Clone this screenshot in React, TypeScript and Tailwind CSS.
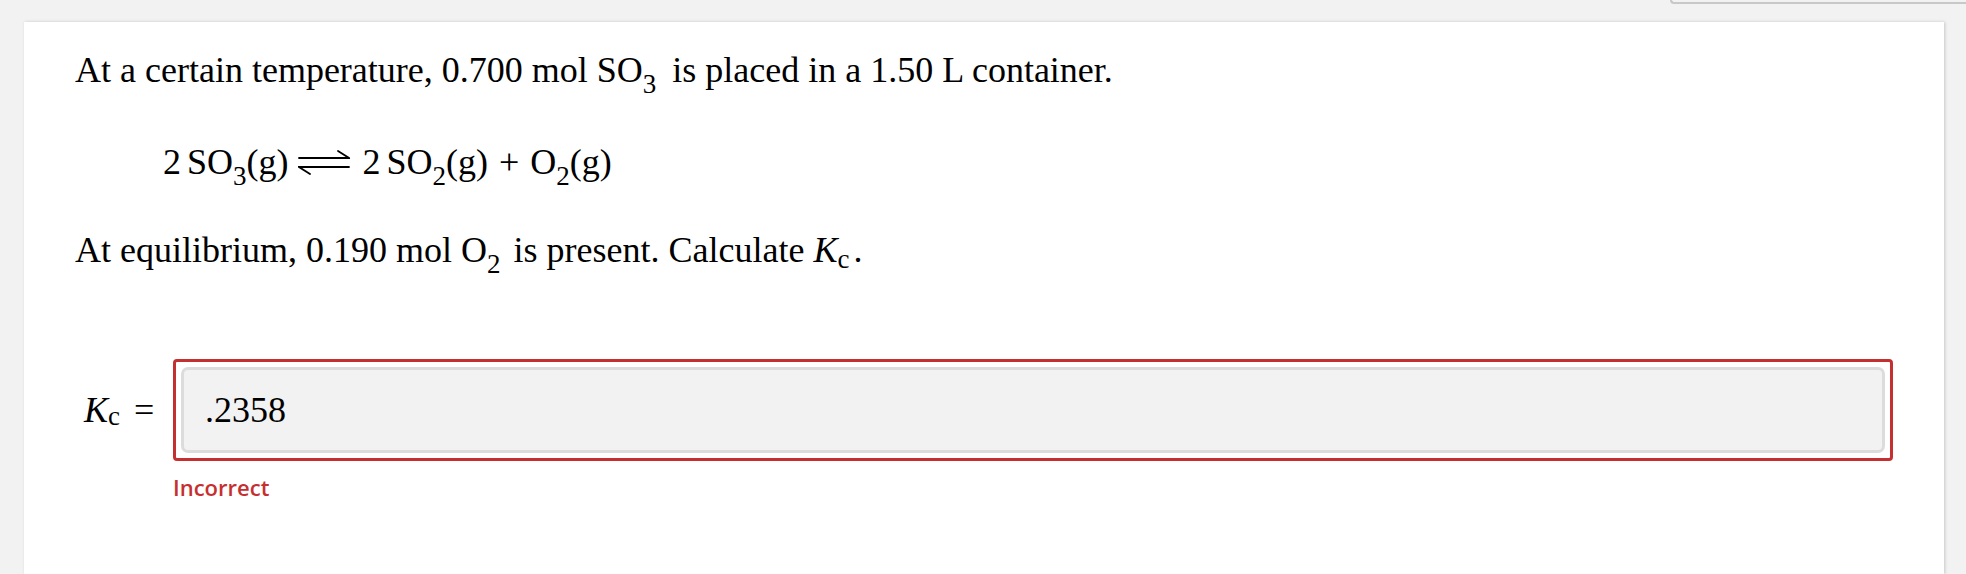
import React from 'react';

// Small subscript used for chemical formulas and K_c
function Sub({ children, shift = 'top-[11px]' }: { children: React.ReactNode; shift?: string }) {
  return <span className={`relative ${shift} text-[27px] leading-none`}>{children}</span>;
}

function EquilibriumArrow() {
  return (
    <svg
      width="52"
      height="28"
      viewBox="0 0 52 28"
      className="inline-block align-[-3px] ml-[9px] mr-[13px]"
      fill="none"
      stroke="#000"
      strokeWidth="1.8"
      strokeLinecap="round"
    >
      <path d="M1 9 H51 L40 2" />
      <path d="M51 18 H1 L12 25" />
    </svg>
  );
}

function Kc() {
  return (
    <>
      <span className="italic">K</span>
      <Sub shift="top-[6px]">c</Sub>
    </>
  );
}

export default function App() {
  return (
    <div className="h-[574px] overflow-hidden bg-[#f2f2f2] flex flex-col font-['Liberation_Serif',serif] text-black">
      {/* edge of the toolbar above */}
      <div className="ml-auto w-[296px] h-[4px] border-l-2 border-b-2 border-[#c8c8c8] rounded-bl-[4px] bg-[#f2f2f2]" />

      <div className="mt-[18px] ml-[24px] mr-[22px] flex-1 bg-white shadow-[1px_0_3px_rgba(0,0,0,0.18)] pt-[26px] px-[51px]">
        <p className="text-[36px] leading-[44px] whitespace-nowrap">
          At a certain temperature, 0.700 mol SO<Sub>3</Sub>
          <span className="ml-[16px]">is placed in a 1.50 L container.</span>
        </p>

        <div className="mt-[48px] pl-[88px] text-[36px] leading-[44px] whitespace-nowrap">
          2<span className="ml-[6px]">SO</span><Sub>3</Sub>
          <span>(g)</span>
          <EquilibriumArrow />
          2<span className="ml-[6px]">SO</span><Sub>2</Sub>
          <span>(g)</span>
          <span className="mx-[11px]">+</span>
          O<Sub>2</Sub>
          <span>(g)</span>
        </div>

        <p className="mt-[44px] text-[36px] leading-[44px] whitespace-nowrap">
          At equilibrium, 0.190 mol O<Sub>2</Sub>
          <span className="ml-[13px]">is present. Calculate </span>
          <Kc />
          <span className="ml-[4px]">.</span>
        </p>

        <div className="mt-[87px] flex items-start">
          <div className="w-[98px] h-[102px] flex items-center pl-[9px] text-[36px] leading-none whitespace-nowrap">
            <Kc />
            <span className="ml-[14px]">=</span>
          </div>
          <div className="flex-1 flex flex-col">
            <div className="h-[102px] border-[3px] border-[#c3302f] rounded-[4px] p-[5px] bg-white">
              <div className="h-full border-[3px] border-[#dcdcdc] rounded-[7px] bg-[#f2f2f2] flex items-center px-[21px] text-[36px] leading-none">
                .2358
              </div>
            </div>
            <div className="mt-[11px] font-['Open_Sans',sans-serif] font-semibold text-[22px] leading-[30px] text-[#c62f30]">
              Incorrect
            </div>
          </div>
        </div>
      </div>
    </div>
  );
}
